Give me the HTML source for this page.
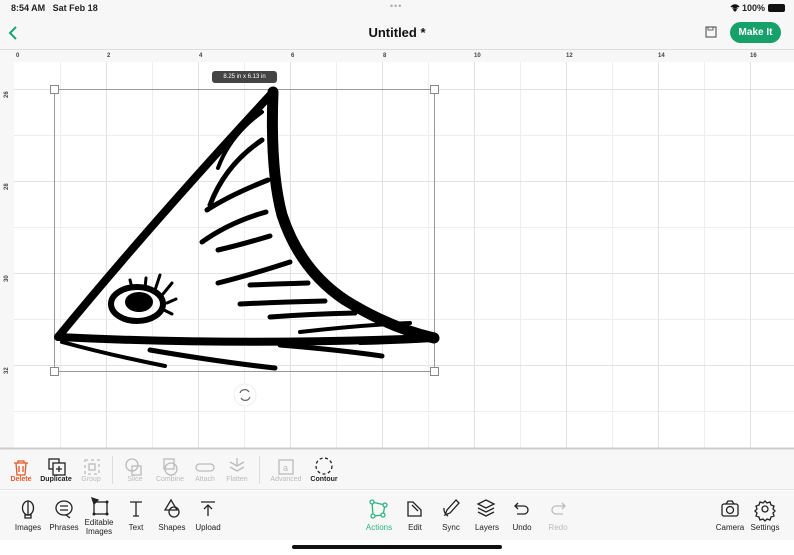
<!DOCTYPE html>
<html><head><meta charset="utf-8"><style>
*{margin:0;padding:0;box-sizing:border-box}
body{width:794px;height:555px;overflow:hidden;background:#fff;font-family:"Liberation Sans",sans-serif;position:relative;color:#222}
.abs{position:absolute}
.lbl{position:absolute;font-size:8px;text-align:center;white-space:nowrap}
</style></head><body>
<div class="abs" style="left:0;top:0;width:794px;height:50px;background:#f7f7f7;border-bottom:1px solid #ddd"></div>
<div class="abs" style="left:11px;top:3px;font-size:9px;font-weight:bold;color:#222">8:54 AM&nbsp;&nbsp;&nbsp;Sat Feb 18</div>
<div class="abs" style="left:390px;top:1px;font-size:9px;color:#aaa;letter-spacing:1px">•••</div>
<div class="abs" style="left:742px;top:3px;font-size:9px;font-weight:bold">100%</div>
<svg class="abs" style="left:730px;top:4px" width="10" height="8" viewBox="0 0 10 8"><path d="M1 3Q5 -1 9 3M2.5 4.5Q5 2 7.5 4.5M5 7L3.8 5.8Q5 4.8 6.2 5.8Z" stroke="#111" stroke-width="1.3" fill="#111"/></svg>
<div class="abs" style="left:768px;top:4px;width:17px;height:8px;background:#111;border-radius:2px"></div>
<svg class="abs" style="left:7px;top:25px" width="12" height="16"><path d="M9 2L3 8L9 14" stroke="#1ba672" stroke-width="2" fill="none"/></svg>
<div class="abs" style="left:340px;top:25px;width:114px;text-align:center;font-size:13px;font-weight:bold;color:#111">Untitled *</div>
<svg class="abs" style="left:705px;top:26px" width="12" height="12"><rect x="1" y="1" width="10" height="10" fill="none" stroke="#444"/><rect x="3" y="1" width="5" height="3" fill="none" stroke="#444" stroke-width=".8"/></svg>
<div class="abs" style="left:730px;top:22px;width:51px;height:21px;border-radius:11px;background:#16a06a;color:#fff;font-size:10px;font-weight:bold;text-align:center;line-height:21px">Make It</div>

<svg class="abs" style="left:0;top:50px" width="794" height="400">
<rect width="794" height="400" fill="#fff"/>
<g stroke="#eee" stroke-width="1">
<line x1="60.5" y1="12" x2="60.5" y2="398"/><line x1="152.5" y1="12" x2="152.5" y2="398"/><line x1="244.5" y1="12" x2="244.5" y2="398"/><line x1="336.5" y1="12" x2="336.5" y2="398"/><line x1="428.5" y1="12" x2="428.5" y2="398"/><line x1="520.5" y1="12" x2="520.5" y2="398"/><line x1="612.5" y1="12" x2="612.5" y2="398"/><line x1="704.5" y1="12" x2="704.5" y2="398"/>
<line x1="14" y1="85.5" x2="794" y2="85.5"/><line x1="14" y1="177.5" x2="794" y2="177.5"/><line x1="14" y1="269.5" x2="794" y2="269.5"/><line x1="14" y1="361.5" x2="794" y2="361.5"/>
</g>
<g stroke="#e2e2e2" stroke-width="1">
<line x1="106.5" y1="12" x2="106.5" y2="398"/><line x1="198.5" y1="12" x2="198.5" y2="398"/><line x1="290.5" y1="12" x2="290.5" y2="398"/><line x1="382.5" y1="12" x2="382.5" y2="398"/><line x1="474.5" y1="12" x2="474.5" y2="398"/><line x1="566.5" y1="12" x2="566.5" y2="398"/><line x1="658.5" y1="12" x2="658.5" y2="398"/><line x1="750.5" y1="12" x2="750.5" y2="398"/>
<line x1="14" y1="39.5" x2="794" y2="39.5"/><line x1="14" y1="131.5" x2="794" y2="131.5"/><line x1="14" y1="223.5" x2="794" y2="223.5"/><line x1="14" y1="315.5" x2="794" y2="315.5"/>
</g>
<rect x="0" y="0" width="794" height="12" fill="#f7f7f7"/>
<rect x="0" y="0" width="14" height="400" fill="#f7f7f7"/>
<line x1="0" y1="398.5" x2="794" y2="398.5" stroke="#ccc" stroke-width="2"/>
<g font-size="6" font-weight="bold" fill="#444" font-family="Liberation Sans">
<text x="16" y="7">0</text><text x="107" y="7">2</text><text x="199" y="7">4</text><text x="291" y="7">6</text><text x="383" y="7">8</text><text x="474" y="7">10</text><text x="566" y="7">12</text><text x="658" y="7">14</text><text x="750" y="7">16</text>
<text transform="translate(8,48) rotate(-90)">26</text><text transform="translate(8,140) rotate(-90)">28</text><text transform="translate(8,232) rotate(-90)">30</text><text transform="translate(8,324) rotate(-90)">32</text>
</g>
</svg>

<div class="abs" style="left:212px;top:71px;width:65px;height:12px;background:#444;border-radius:3px;color:#fff;font-size:6px;text-align:center;line-height:12px">8.25 in x 6.13 in</div>

<svg class="abs" style="left:0;top:0" width="794" height="555">
<rect x="54.5" y="89.5" width="380" height="282" fill="none" stroke="#999" stroke-width="1"/>
<g fill="none" stroke="#000" stroke-linecap="round">
<path d="M58 337 Q150 225 273 92" stroke-width="8"/>
<path d="M273 92 Q270 170 282 215 Q300 270 345 300 Q390 328 434 338" stroke-width="11"/>
<path d="M58 337 Q240 346 430 338" stroke-width="8"/>
<path d="M62 342 Q110 355 165 366" stroke-width="4"/>
<path d="M150 350 Q220 362 275 368" stroke-width="5"/>
<path d="M280 345 Q340 350 382 356" stroke-width="5"/>
<path d="M300 332 Q360 325 410 323" stroke-width="4"/>
<path d="M360 343 Q400 342 432 340" stroke-width="4"/>
<path d="M262 112 Q230 135 218 168" stroke-width="4"/>
<path d="M262 140 Q225 165 210 205" stroke-width="5"/>
<path d="M268 180 Q230 195 207 210" stroke-width="5"/>
<path d="M266 212 Q230 222 202 242" stroke-width="5"/>
<path d="M270 236 Q240 245 218 250" stroke-width="5"/>
<path d="M290 262 Q250 275 218 283" stroke-width="5"/>
<path d="M308 283 Q275 284 250 285" stroke-width="5"/>
<path d="M325 301 Q280 302 240 304" stroke-width="5"/>
<path d="M355 313 Q310 314 270 317" stroke-width="5"/>
<ellipse cx="137" cy="304" rx="26" ry="17" stroke-width="6"/>
<path d="M155 290 L160 275 M163 294 L172 283 M167 303 L176 299 M164 310 L172 314 M145 288 L146 278 M132 288 L130 280" stroke-width="3"/>
</g>
<ellipse cx="139" cy="302" rx="14" ry="10" fill="#000"/>
<g fill="#fff" stroke="#888"><rect x="50.5" y="85.5" width="8" height="8"/><rect x="430.5" y="85.5" width="8" height="8"/><rect x="50.5" y="367.5" width="8" height="8"/><rect x="430.5" y="367.5" width="8" height="8"/></g>
<circle cx="245" cy="395" r="11" fill="#fff" stroke="#eee"/>
<path d="M240 393 A5 5 0 0 1 249 392 M250 397 A5 5 0 0 1 241 398" stroke="#666" stroke-width="1.2" fill="none"/>
</svg>

<div class="abs" style="left:0;top:450px;width:794px;height:40px;background:#f7f7f7;border-bottom:1px solid #e6e6e6"></div>
<div class="abs" style="left:0;top:491px;width:794px;height:49px;background:#f7f7f7"></div>
<div class="abs" style="left:112px;top:456px;width:1px;height:28px;background:#ddd"></div>
<div class="abs" style="left:259px;top:456px;width:1px;height:28px;background:#ddd"></div>
<svg class="abs" style="left:0;top:450px" width="794" height="90" fill="none" stroke-width="1.3">
<path d="M14 13h14M18 13v-2h6v2M16 13l1 12h8l1-12M19 16v6M23 16v6" stroke="#e05a2b"/>
<rect x="49" y="9" width="10" height="10" stroke="#222"/><rect x="53" y="13" width="12" height="12" stroke="#222" fill="#f7f7f7"/><path d="M59 16v6M56 19h6" stroke="#222"/>
<rect x="85" y="10" width="14" height="14" stroke="#bbb" stroke-dasharray="3 3"/><rect x="89" y="14" width="6" height="6" stroke="#bbb"/>
<circle cx="132" cy="15" r="6" stroke="#bbb"/><rect x="132" y="16" width="9" height="9" stroke="#bbb"/>
<rect x="164" y="9" width="10" height="10" stroke="#bbb"/><circle cx="171" cy="19" r="6" stroke="#bbb"/>
<rect x="196" y="14" width="18" height="7" rx="3.5" stroke="#bbb"/>
<path d="M230 12l7 4l7-4M230 17l7 4l7-4M237 8v8" stroke="#bbb"/>
<rect x="279" y="10" width="14" height="14" stroke="#bbb"/><text x="283" y="21" font-size="9" fill="#bbb" stroke="none">a</text>
<circle cx="324" cy="16" r="8" stroke="#222" stroke-dasharray="3 2.5"/>
<ellipse cx="28" cy="58" rx="5.5" ry="7" stroke="#222"/><path d="M28 51v14M25 65h6v3h-6z" stroke="#222"/>
<ellipse cx="64" cy="58" rx="8" ry="7" stroke="#222"/><path d="M60 56h8M60 60h8M66 65l4 3" stroke="#222"/>
<rect x="94" y="52" width="13" height="12" stroke="#222"/><path d="M92 48l6 2l-4 4z" fill="#222" stroke="#222"/><circle cx="94" cy="64" r="1.5" fill="#222"/><circle cx="107" cy="64" r="1.5" fill="#222"/><circle cx="107" cy="52" r="1.5" fill="#222"/>
<path d="M130 52h12M136 52v14M133 66h6" stroke="#222"/>
<path d="M171 50l-6 10h12z" stroke="#222"/><circle cx="174" cy="62" r="5" stroke="#222"/>
<path d="M201 52h14M208 66v-11M204 59l4-4l4 4" stroke="#222"/>
<path d="M372 52l13 3l-2 10l-10 1z" stroke="#2bb37f"/><g fill="#fff" stroke="#2bb37f"><circle cx="372" cy="52" r="2"/><circle cx="385" cy="55" r="2"/><circle cx="383" cy="65" r="2"/><circle cx="373" cy="66" r="2"/></g>
<path d="M408 52h5l8 8v6h-13z M412 55l6 6" stroke="#222"/>
<path d="M456 50l-9 10l-2 5l5-2l9-10z M444 58a8 8 0 0 0 4 8" stroke="#222"/>
<path d="M486 50l8 4l-8 4l-8-4z M478 58l8 4l8-4M478 62l8 4l8-4" stroke="#222"/>
<path d="M518 53l-3 3l3 3M515 56h9a4 4 0 0 1 0 8h-7" stroke="#222"/>
<path d="M562 53l3 3l-3 3M565 56h-9a4 4 0 0 0 0 8h7" stroke="#bbb"/>
<rect x="722" y="54" width="16" height="12" rx="2" stroke="#222"/><path d="M726 54l2-3h4l2 3" stroke="#222"/><circle cx="730" cy="60" r="3.5" stroke="#222"/>
<circle cx="765" cy="59" r="3" stroke="#222"/><path d="M765 51l2 2l3-1l1 3l3 1l-1 3l2 2l-2 2l1 3l-3 1l-1 3l-3-1l-2 2l-2-2l-3 1l-1-3l-3-1l1-3l-2-2l2-2l-1-3l3-1l1-3l3 1z" stroke="#222"/>
</svg>
<div class="lbl" style="left:1px;top:476px;width:40px;color:#e05a2b;font-size:7px;font-weight:bold">Delete</div>
<div class="lbl" style="left:36px;top:476px;width:40px;font-size:7px;font-weight:bold">Duplicate</div>
<div class="lbl" style="left:71px;top:476px;width:40px;font-size:7px;color:#bbb">Group</div>
<div class="lbl" style="left:115px;top:476px;width:40px;font-size:7px;color:#bbb">Slice</div>
<div class="lbl" style="left:150px;top:476px;width:40px;font-size:7px;color:#bbb">Combine</div>
<div class="lbl" style="left:185px;top:476px;width:40px;font-size:7px;color:#bbb">Attach</div>
<div class="lbl" style="left:217px;top:476px;width:40px;font-size:7px;color:#bbb">Flatten</div>
<div class="lbl" style="left:266px;top:476px;width:40px;font-size:7px;color:#bbb">Advanced</div>
<div class="lbl" style="left:304px;top:476px;width:40px;font-size:7px;font-weight:bold">Contour</div>
<div class="lbl" style="left:8px;top:523px;width:40px">Images</div>
<div class="lbl" style="left:44px;top:523px;width:40px">Phrases</div>
<div class="lbl" style="left:79px;top:518px;width:40px;line-height:9px">Editable<br>Images</div>
<div class="lbl" style="left:116px;top:523px;width:40px">Text</div>
<div class="lbl" style="left:152px;top:523px;width:40px">Shapes</div>
<div class="lbl" style="left:188px;top:523px;width:40px">Upload</div>
<div class="lbl" style="left:359px;top:523px;width:40px;color:#2bb37f">Actions</div>
<div class="lbl" style="left:395px;top:523px;width:40px">Edit</div>
<div class="lbl" style="left:431px;top:523px;width:40px">Sync</div>
<div class="lbl" style="left:467px;top:523px;width:40px">Layers</div>
<div class="lbl" style="left:502px;top:523px;width:40px">Undo</div>
<div class="lbl" style="left:538px;top:523px;width:40px;color:#bbb">Redo</div>
<div class="lbl" style="left:710px;top:523px;width:40px">Camera</div>
<div class="lbl" style="left:745px;top:523px;width:40px">Settings</div>
<div class="abs" style="left:292px;top:545px;width:210px;height:4px;border-radius:2px;background:#111"></div>
</body></html>
